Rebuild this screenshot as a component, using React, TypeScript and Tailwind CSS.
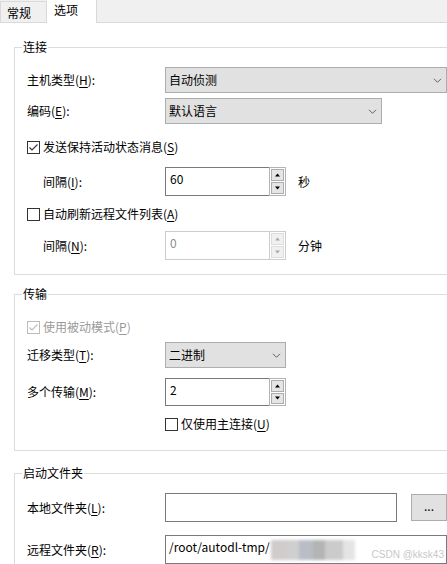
import * as React from "react";

const font = "font-['Noto_Sans_CJK_SC','Noto_Sans',sans-serif]";

function Key({ children }: { children: React.ReactNode }) {
  return <u className="underline-offset-2">{children}</u>;
}

function Check({ checked, disabled }: { checked?: boolean; disabled?: boolean }) {
  return (
    <span
      className={
        "flex h-[13px] w-[13px] shrink-0 items-center justify-center border bg-white " +
        (disabled ? "border-[#bcbcbc]" : "border-[#333333]")
      }
    >
      {checked && (
        <svg width="11" height="11" viewBox="0 0 11 11">
          <path
            d="M1.5 5.5l2.5 2.5 5.5-5.5"
            fill="none"
            stroke={disabled ? "#bcbcbc" : "#333333"}
            strokeWidth="1.1"
          />
        </svg>
      )}
    </span>
  );
}

function Chevron() {
  return (
    <svg width="9" height="5" viewBox="0 0 9 5" className="ml-auto">
      <path d="M1 0.8l3.5 3.5L8 0.8" fill="none" stroke="#606060" strokeWidth="1" />
    </svg>
  );
}

function Combo({ value, width }: { value: string; width: string }) {
  return (
    <div
      className={
        "flex h-[26px] items-center border border-[#adadad] bg-[#e1e1e1] pl-[3px] pr-[4px] " + width
      }
    >
      <span>{value}</span>
      <Chevron />
    </div>
  );
}

function Tri({ down, color }: { down?: boolean; color: string }) {
  return (
    <svg width="7" height="4" viewBox="0 0 7 4">
      <polygon points={down ? "1,0.5 6,0.5 3.5,3.5" : "1,3.5 6,3.5 3.5,0.5"} fill={color} />
    </svg>
  );
}

function Spin({ value, disabled, height = "h-[29px]" }: { value: string; disabled?: boolean; height?: string }) {
  const edge = disabled ? "border-[#cccccc]" : "border-[#7a7a7a]";
  const btn = disabled ? "bg-[#f0f0f0] border-[#dcdcdc]" : "bg-[#e5e5e5] border-[#adadad]";
  const tri = disabled ? "#a8a8a8" : "#000000";
  return (
    <div className={"flex w-[121px] " + height}>
      <div
        className={
          "flex-1 border border-r-0 bg-white pl-[4px] pt-[3px] " +
          edge +
          (disabled ? " text-[#8d8d8d]" : "")
        }
      >
        {value}
      </div>
      <div
        className={
          "flex w-[17px] flex-col gap-[1px] border bg-white p-[1px] " +
          (disabled ? "border-[#cccccc]" : "border-[#b4b4b4]")
        }
      >
        <div className={"flex flex-1 items-center justify-center border " + btn}>
          <Tri color={tri} />
        </div>
        <div className={"flex flex-1 items-center justify-center border " + btn}>
          <Tri down color={tri} />
        </div>
      </div>
    </div>
  );
}

function Group({ title, className, children }: { title: string; className?: string; children: React.ReactNode }) {
  return (
    <fieldset className={"ml-[14px] w-[460px] border border-[#dcdcdc] " + (className ?? "")}>
      <legend className="ml-[7px] px-[1px] leading-[16px]">{title}</legend>
      <div className="flex flex-col pl-[12px]">{children}</div>
    </fieldset>
  );
}

function Label({ children, indent }: { children: React.ReactNode; indent?: boolean }) {
  return <div className={"w-[138px] shrink-0 " + (indent ? "pl-[16px]" : "")}>{children}</div>;
}

export default function App() {
  return (
    <div className={"h-[564px] w-[447px] overflow-hidden bg-white text-[12px] leading-[16px] text-black " + font}>
      {/* tabs */}
      <div className="flex h-[23px] items-end border-b border-[#d9d9d9] bg-[#f0f0f0]">
        <div className="flex h-[21px] w-[47px] items-center border border-b-0 border-[#d9d9d9] bg-[#f0f0f0] pl-[6px] pt-[1px]">
          常规
        </div>
        <div className="-mb-px flex h-[23px] w-[50px] items-start border-r border-[#d9d9d9] bg-white pl-[7px] pt-[2px]">
          选项
        </div>
      </div>

      <Group title="连接" className="mt-[16px] pb-[14px]">
        <div className="mt-[12px] flex items-center">
          <Label>
            主机类型(<Key>H</Key>):
          </Label>
          <Combo value="自动侦测" width="w-[282px]" />
        </div>
        <div className="mt-[5px] flex items-center">
          <Label>
            编码(<Key>E</Key>):
          </Label>
          <Combo value="默认语言" width="w-[217px] h-[25px]" />
        </div>
        <div className="mt-[13px] flex h-[20px] items-center gap-[3px]">
          <Check checked />
          <span>
            发送保持活动状态消息(<Key>S</Key>)
          </span>
        </div>
        <div className="mt-[10px] flex items-center">
          <Label indent>
            间隔(<Key>I</Key>):
          </Label>
          <Spin value="60" />
          <span className="ml-[12px]">秒</span>
        </div>
        <div className="mt-[8px] flex h-[20px] items-center gap-[3px]">
          <Check />
          <span>
            自动刷新远程文件列表(<Key>A</Key>)
          </span>
        </div>
        <div className="mt-[7px] flex items-center">
          <Label indent>
            间隔(<Key>N</Key>):
          </Label>
          <Spin value="0" disabled />
          <span className="ml-[12px]">分钟</span>
        </div>
      </Group>

      <Group title="传输" className="mt-[11px] pb-[16px]">
        <div className="mt-[15px] flex h-[20px] items-center gap-[3px] text-[#9a9a9a]">
          <Check checked disabled />
          <span>
            使用被动模式(<Key>P</Key>)
          </span>
        </div>
        <div className="mt-[5px] flex items-center">
          <Label>
            迁移类型(<Key>T</Key>):
          </Label>
          <Combo value="二进制" width="w-[121px]" />
        </div>
        <div className="mt-[10px] flex items-center">
          <Label>
            多个传输(<Key>M</Key>):
          </Label>
          <Spin value="2" height="h-[28px]" />
        </div>
        <div className="mt-[8px] flex h-[20px] items-center gap-[3px] pl-[138px]">
          <Check />
          <span>
            仅使用主连接(<Key>U</Key>)
          </span>
        </div>
      </Group>

      <Group title="启动文件夹" className="mt-[14px] pb-[20px]">
        <div className="mt-[12px] flex items-center">
          <Label>
            本地文件夹(<Key>L</Key>):
          </Label>
          <div className="h-[29px] w-[232px] border border-[#7a7a7a] bg-white" />
          <button className="ml-[14px] flex h-[27px] w-[36px] items-center justify-center border border-[#adadad] bg-[#e1e1e1] pb-[3px]">
            ...
          </button>
        </div>
        <div className="mt-[13px] flex items-center">
          <Label>
            远程文件夹(<Key>R</Key>):
          </Label>
          <div className="flex h-[29px] w-[282px] border border-[#7a7a7a] bg-white pl-[3px] pt-[3px]">
            <span>/root/autodl-tmp/</span>
            <span className="ml-[1px] mt-[1px] flex h-[20px] items-stretch blur-[1.5px]">
              <span className="w-[16px] bg-[#d0cccc]" />
              <span className="w-[12px] bg-[#cfcfcf]" />
              <span className="w-[14px] bg-[#b8bdc6]" />
              <span className="w-[12px] bg-[#b4b4b4]" />
              <span className="w-[18px] bg-[#cbcbcb]" />
              <span className="w-[12px] bg-[#e4e4e4]" />
            </span>
            <span className="ml-auto self-end pb-[2px] pr-[2px] font-['Liberation_Sans',sans-serif] text-[10px] leading-[13px] text-[#c8c8c8]">
              CSDN @kksk43
            </span>
          </div>
        </div>
      </Group>
    </div>
  );
}
